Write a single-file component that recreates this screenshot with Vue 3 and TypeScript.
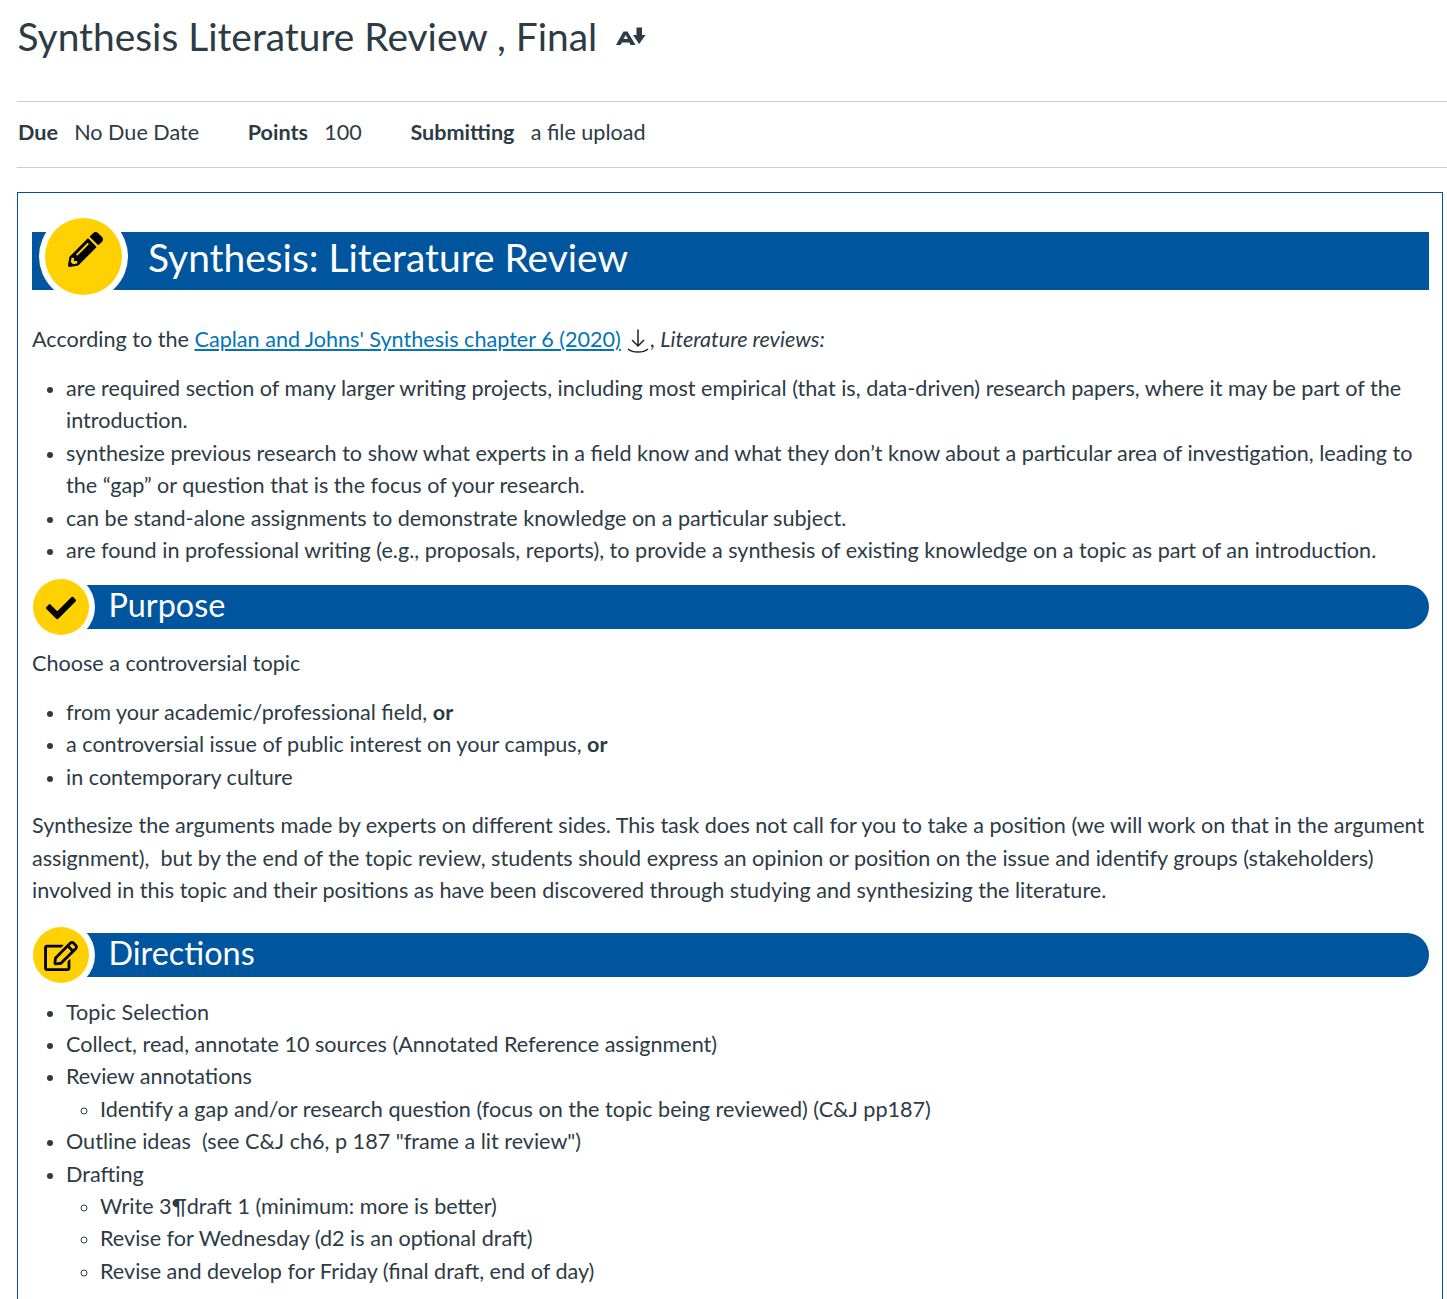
<script setup lang="ts">
const pencil = 'M497.9 142.1l-46.1 46.1c-4.7 4.7-12.3 4.7-17 0l-111-111c-4.7-4.7-4.7-12.3 0-17l46.1-46.1c18.7-18.7 49.1-18.7 67.9 0l60.1 60.1c18.8 18.7 18.8 49.1 0 67.9zM284.2 99.8L21.6 362.4.4 483.9c-2.9 16.4 11.4 30.6 27.8 27.8l121.5-21.3 262.6-262.6c4.7-4.7 4.7-12.3 0-17l-111-111c-4.8-4.7-12.4-4.7-17.1 0zM124.1 339.9c-5.5-5.5-5.5-14.3 0-19.8l154-154c5.5-5.5 14.3-5.5 19.8 0s5.5 14.3 0 19.8l-154 154c-5.5 5.5-14.3 5.5-19.8 0zM88 424h48v36.3l-64.5 11.3-31.1-31.1L51.7 376H88v48z'
const check = 'M173.898 439.404l-166.4-166.4c-9.997-9.997-9.997-26.206 0-36.204l36.203-36.204c9.997-9.998 26.207-9.998 36.204 0L192 312.69 432.095 72.596c9.997-9.997 26.207-9.997 36.204 0l36.203 36.204c9.997 9.997 9.997 26.206 0 36.204l-294.4 294.401c-9.998 9.997-26.207 9.997-36.204-.001z'
const edit = 'M402.3 344.9l32-32c5-5 13.7-1.5 13.7 5.7V464c0 26.5-21.5 48-48 48H48c-26.5 0-48-21.5-48-48V112c0-26.5 21.5-48 48-48h273.5c7.1 0 10.7 8.6 5.7 13.7l-32 32c-1.5 1.5-3.5 2.3-5.7 2.3H48v352h352V350.5c0-2.1.8-4.1 2.3-5.6zm156.6-201.8L296.3 405.7l-90.4 10c-26.2 2.9-48.5-19.2-45.6-45.6l10-90.4L432.9 17.1c22.9-22.9 59.9-22.9 82.7 0l43.2 43.2c22.9 22.9 22.9 60 .1 82.8zM460.1 174L402 115.9 216.2 301.8l-7.3 65.3 65.3-7.3L460.1 174zm64.8-79.7l-43.2-43.2c-4.1-4.1-10.8-4.1-14.8 0L436 82l58.1 58.1 30.9-30.9c4-4.2 4-10.8-.1-14.9z'
</script>

<template>
  <div class="page">
    <header class="title-row">
      <h1 class="title">Synthesis Literature Review , Final</h1>
      <svg class="sort-icon" viewBox="0 0 30 20" aria-hidden="true">
        <path d="M0 18 7.500 4.500H11.500L19.500 18H14.500L13.500 15.500H6L4.500 18zM7.500 12h4.500L9.700 8z" fill-rule="evenodd" />
        <path d="M20.500 .5h5.500V8h3.500L23.200 17 17 8h3.500z" />
      </svg>
    </header>

    <div class="meta">
      <span class="meta-item"><b>Due</b><span>No Due Date</span></span>
      <span class="meta-item"><b>Points</b><span>100</span></span>
      <span class="meta-item"><b>Submitting</b><span>a file upload</span></span>
    </div>

    <main class="box">
      <h2 class="banner">
        <span class="badge"><svg class="i-pencil" viewBox="0 0 512 512"><path :d="pencil" /></svg></span>
        Synthesis: Literature Review
      </h2>

      <p class="intro">
        According to the <a href="#">Caplan and Johns' Synthesis chapter 6 (2020)</a>
        <svg class="dl" viewBox="0 0 22 24" aria-hidden="true">
          <path d="M11 .5V17M5 11l6 6 6-6M1 20c2.500 2 4.500 3 10 3s7.500-1 10-3" />
        </svg>, <em>Literature reviews:</em>
      </p>
      <ul>
        <li>are required section of many larger writing projects, including most empirical (that is, data-driven) research papers, where it may be part of the introduction.</li>
        <li>synthesize previous research to show what experts in a field know and what they don’t know about a particular area of investigation, leading to the “gap” or question that is the focus of your research.</li>
        <li>can be stand-alone assignments to demonstrate knowledge on a particular subject.</li>
        <li>are found in professional writing (e.g., proposals, reports), to provide a synthesis of existing knowledge on a topic as part of an introduction.</li>
      </ul>

      <h3 class="pill purpose">
        <span class="badge small"><svg class="i-check" viewBox="0 0 512 512"><path :d="check" /></svg></span>
        Purpose
      </h3>
      <p class="lead">Choose a controversial topic</p>
      <ul>
        <li>from your academic/professional field, <b>or</b></li>
        <li>a controversial issue of public interest on your campus, <b>or</b></li>
        <li>in contemporary culture</li>
      </ul>
      <p>Synthesize the arguments made by experts on different sides. This task does not call for you to take a position (we will work on that in the argument assignment),&nbsp; but by the end of the topic review, students should express an opinion or position on the issue and identify groups (stakeholders) involved in this topic and their positions as have been discovered through studying and synthesizing the literature.</p>

      <h3 class="pill directions">
        <span class="badge small"><svg class="i-edit" viewBox="0 0 576 512"><path :d="edit" /></svg></span>
        Directions
      </h3>
      <ul>
        <li>Topic Selection</li>
        <li>Collect, read, annotate 10 sources (Annotated Reference assignment)</li>
        <li>Review annotations
          <ul><li>Identify a gap and/or research question (focus on the topic being reviewed) (C&amp;J pp187)</li></ul>
        </li>
        <li>Outline ideas&nbsp; (see C&amp;J ch6, p 187 "frame a lit review")</li>
        <li>Drafting
          <ul>
            <li>Write 3¶draft 1 (minimum: more is better)</li>
            <li>Revise for Wednesday (d2 is an optional draft)</li>
            <li>Revise and develop for Friday (final draft, end of day)</li>
          </ul>
        </li>
      </ul>
    </main>
  </div>
</template>

<style scoped>
.page {
  height: 1299px;
  overflow: hidden;
  padding-left: 17px;
  box-sizing: border-box;
  font-family: Lato, "Open Sans", sans-serif;
  font-size: 21.6px;
  line-height: 32.4px;
  color: #2d3b45;
  background: #fff;
}
.title-row {
  height: 102px;
  box-sizing: border-box;
  display: flex;
  align-items: flex-start;
  padding: 13px 0 0 0.5px;
  border-bottom: 1px solid #c7cdd1;
}
.title {
  margin: 0;
  font-size: 38.9px;
  line-height: 47px;
  font-weight: 400;
}
.sort-icon {
  width: 30px;
  height: 20px;
  margin: 14px 0 0 19px;
  fill: #2d3b45;
}
.meta {
  height: 66px;
  box-sizing: border-box;
  padding: 0 0 5px 1px;
  display: flex;
  align-items: center;
  gap: 48.6px;
  border-bottom: 1px solid #c7cdd1;
}
.meta-item {
  display: flex;
  gap: 16.2px;
}
.box {
  margin: 24px 4px 0 0;
  padding: 39px 13px 0 14px;
  border: 1px solid #00559f;
  border-bottom: 0;
  height: 1200px;
}
.banner {
  position: relative;
  margin: 0 0 33.3px;
  height: 58px;
  padding-left: 116px;
  background: #00559f;
  color: #fff;
  font-size: 38.9px;
  line-height: 50px;
  font-weight: 400;
}
.pill {
  position: relative;
  margin: 0 0 0 29px;
  height: 44px;
  padding-left: 47.5px;
  background: #00559f;
  border-radius: 0 22px 22px 0;
  color: #fff;
  font-size: 32.4px;
  line-height: 40px;
  font-weight: 400;
}
.badge {
  position: absolute;
  left: 13px;
  top: -14px;
  width: 77px;
  height: 77px;
  border-radius: 50%;
  background: #ffd100;
  box-shadow: 0 0 0 6px #fff;
  display: flex;
  align-items: center;
  justify-content: center;
}
.badge.small {
  left: -28px;
  top: -6px;
  width: 56px;
  height: 56px;
}
.i-pencil { width: 35px; height: 35px; margin: -15px 0 0 4px; }
.i-check { width: 30px; height: 30px; margin-top: 2px; }
.i-edit { width: 34px; height: 30px; margin: 1px 0 0 0; }
p {
  margin: 0 0 16.2px;
}
.lead { margin-bottom: 16.4px; }
a {
  color: #0374b5;
  text-decoration: underline;
}
.dl {
  width: 22px;
  height: 24px;
  margin: 0 1px 0 6px;
  vertical-align: -6px;
  fill: none;
  stroke: #222;
  stroke-width: 1.5;
}
ul {
  margin: 0 0 16.2px;
  padding-left: 34px;
}
ul ul {
  margin: 0;
  list-style: circle;
}
li::marker {
  font-size: 19px;
}
.purpose { margin-top: 18.7px; margin-bottom: 18px; }
.directions { margin-top: 26.6px; margin-bottom: 18.5px; }
</style>
<style>
html, body { margin: 0; padding: 0; background: #fff; overflow: hidden; }
</style>
